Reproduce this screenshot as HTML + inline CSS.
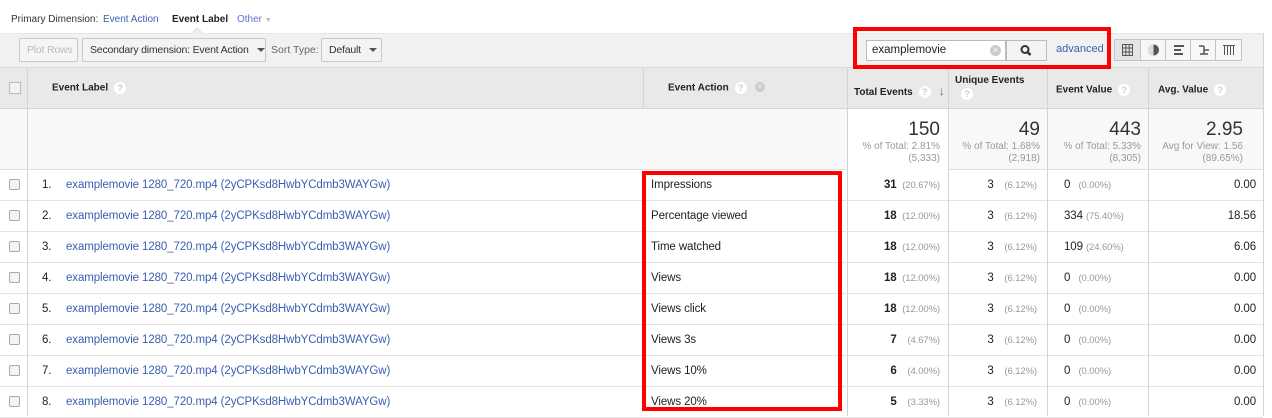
<!DOCTYPE html>
<html><head><style>
*{box-sizing:border-box;margin:0;padding:0}
body{width:1272px;height:416px;overflow:hidden;background:#fff;font-family:"Liberation Sans",Arial,sans-serif;font-size:11px;color:#222;position:relative}
.a{position:absolute;white-space:nowrap}
.lnk{color:#3a5fb0}
.btn{position:absolute;white-space:nowrap;overflow:hidden;border:1px solid #c8c8c8;border-radius:2px;background:#f3f3f3;height:24px;line-height:22px;padding:0 7px;color:#333;font-size:10.5px;letter-spacing:-0.2px}
.car{display:inline-block;width:0;height:0;border-left:4px solid transparent;border-right:4px solid transparent;border-top:4px solid #555;vertical-align:middle;margin-left:8px}
.q{display:inline-block;width:12px;height:12px;border-radius:6px;background:#fff;color:#ccc;font-size:9px;text-align:center;line-height:12px;vertical-align:middle;margin-left:6px}
.vl{position:absolute;width:1px;background:#d4d4d4}
.row{position:absolute;left:0;width:1263px;height:31px;border-bottom:1px solid #e4e4e4;white-space:nowrap}
.cb{position:absolute;left:9px;top:9px;width:11px;height:11px;border:1px solid #aaa;border-radius:2px;background:#f4f4f4}
.c{position:absolute;top:9px;font-size:11.5px;letter-spacing:-0.1px}
.r{text-align:right}
.p{color:#999;font-size:9.5px}
.num{font-size:19px;color:#333}
.sub{font-size:10px;color:#999;line-height:12px}
</style></head><body>
<div class="a" style="left:11px;top:14px;font-size:10px;color:#333">Primary Dimension:</div>
<div class="a lnk" style="left:103px;top:14px;font-size:10px">Event Action</div>
<div class="a" style="left:172px;top:14px;font-weight:bold;color:#222;font-size:10px">Event Label</div>
<div class="a" style="left:237px;top:14px;color:#6a6ad8;font-size:10px">Other <span style="color:#bbb;font-size:7px">▼</span></div>
<div class="a" style="left:0;top:33px;width:1263px;height:34px;background:#f1f1f1;border-top:1px solid #e6e6e6"></div>
<div class="a" style="left:193px;top:29px;width:8px;height:8px;background:#f1f1f1;border-left:1px solid #e0e0e0;border-top:1px solid #e0e0e0;transform:rotate(45deg)"></div>
<div class="btn" style="left:19px;top:38px;width:59px;color:#bbb;background:#f5f5f5">Plot Rows</div>
<div class="btn" style="left:82px;top:38px;width:184px">Secondary dimension: Event Action<span class="car"></span></div>
<div class="a" style="left:271px;top:44px;color:#666;font-size:10.5px">Sort Type:</div>
<div class="btn" style="left:321px;top:38px;width:61px">Default<span class="car"></span></div>
<div class="a" style="left:866px;top:40px;width:140px;height:21px;border:1px solid #bbb;background:#fff;padding:3px 5px;font-size:11.5px">examplemovie<span style="position:absolute;right:4px;top:4px;width:11px;height:11px;border-radius:6px;background:#ccc;color:#fff;font-size:9px;line-height:11px;text-align:center">×</span></div>
<div class="a" style="left:1006px;top:40px;width:41px;height:21px;border:1px solid #bbb;background:#f4f4f4"><svg width="41" height="21" style="position:absolute;left:-1px;top:-1px"><circle cx="19" cy="9.5" r="3.5" fill="none" stroke="#333" stroke-width="2"/><line x1="21.5" y1="12" x2="24.5" y2="15" stroke="#333" stroke-width="2.5"/></svg></div>
<div class="a lnk" style="left:1056px;top:43px;font-size:11px">advanced</div>
<div class="a" style="left:1114px;top:39px;width:128px;height:22px;border:1px solid #c4c4c4;background:#f7f7f7;display:flex">
<div style="width:26px;border-right:1px solid #c4c4c4;background:#e4e4e4"><svg width="25" height="20"><g stroke="#555" fill="none"><rect x="7.5" y="4.5" width="10" height="11"/><line x1="10.8" y1="4" x2="10.8" y2="16"/><line x1="14.2" y1="4" x2="14.2" y2="16"/><line x1="7" y1="8" x2="18" y2="8"/><line x1="7" y1="12" x2="18" y2="12"/></g></svg></div>
<div style="width:25px;border-right:1px solid #c4c4c4"><svg width="25" height="20"><circle cx="12.5" cy="10" r="5.5" fill="#555"/><path d="M12.5 4.5 A5.5 5.5 0 0 0 12.5 15.5Z" fill="#ddd"/></svg></div>
<div style="width:25px;border-right:1px solid #c4c4c4"><svg width="25" height="20"><g fill="#555"><rect x="8" y="5" width="10" height="2"/><rect x="8" y="9" width="7" height="2"/><rect x="8" y="13" width="9" height="2"/></g></svg></div>
<div style="width:25px;border-right:1px solid #c4c4c4"><svg width="25" height="20"><g stroke="#555" stroke-width="1.5" fill="none"><path d="M8 6h5M13 6v8M13 10h5M9 14h8"/></g></svg></div>
<div style="width:25px"><svg width="25" height="20"><g stroke="#555" stroke-width="1"><path d="M8.5 6v9M11.5 6v9M14.5 6v9M17.5 6v9M7 5.5h12"/></g></svg></div>
</div>
<!-- header -->
<div class="a" style="left:0;top:67px;width:1263px;height:42px;background:#e9e9e9;border-top:1px solid #d8d8d8;border-bottom:1px solid #d4d4d4"></div>
<div class="a" style="left:0;top:109px;width:1263px;height:61px;background:#f8f8f8;border-bottom:1px solid #e0e0e0"></div>
<div class="a" style="left:848px;top:109px;width:101px;height:61px;background:#fff"></div>
<div class="a" style="left:9px;top:82px;width:12px;height:12px;border:1px solid #bbb;background:#f2f2f2"></div>
<div class="a" style="left:52px;top:82px;font-weight:bold;font-size:10px">Event Label<span class="q">?</span></div>
<div class="a" style="left:668px;top:82px;font-weight:bold;font-size:10px">Event Action<span class="q">?</span><span style="display:inline-block;width:10px;height:10px;border-radius:5px;background:#ccc;color:#e9e9e9;font-size:8px;line-height:10px;text-align:center;margin-left:8px;vertical-align:top">×</span></div>
<div class="a" style="left:854px;top:84px;font-weight:bold;font-size:10px">Total Events<span class="q">?</span><span style="color:#666;margin-left:8px;font-size:12px">↓</span></div>
<div class="a" style="left:955px;top:75px;font-weight:bold;font-size:10px">Unique Events<br><span class="q" style="margin:2px 0 0 6px">?</span></div>
<div class="a" style="left:1056px;top:84px;font-weight:bold;font-size:10px">Event Value<span class="q">?</span></div>
<div class="a" style="left:1158px;top:84px;font-weight:bold;font-size:10px">Avg. Value<span class="q">?</span></div>
<div class="a r" style="left:848px;top:119px;width:92px"><div class="num">150</div><div class="sub">% of Total: 2.81%<br>(5,333)</div></div>
<div class="a r" style="left:949px;top:119px;width:91px"><div class="num">49</div><div class="sub">% of Total: 1.68%<br>(2,918)</div></div>
<div class="a r" style="left:1047px;top:119px;width:94px"><div class="num">443</div><div class="sub">% of Total: 5.33%<br>(8,305)</div></div>
<div class="a r" style="left:1149px;top:119px;width:94px"><div class="num">2.95</div><div class="sub">Avg for View: 1.56<br>(89.65%)</div></div>

<div class="row" style="top:170px"><div class="cb"></div><div class="c" style="left:42px">1.</div><div class="c lnk" style="left:66px">examplemovie 1280_720.mp4 (2yCPKsd8HwbYCdmb3WAYGw)</div><div class="c" style="left:651px">Impressions</div><div class="c r" style="left:848px;width:92px"><b>31</b> <span class="p">&nbsp;(20.67%)</span></div><div class="c r" style="left:949px;width:88px">3 <span class="p">&nbsp;&nbsp;&nbsp;(6.12%)</span></div><div class="c" style="left:1064px">0 <span class="p">&nbsp;&nbsp;(0.00%)</span></div><div class="c r" style="left:1149px;width:107px">0.00</div></div>
<div class="row" style="top:201px"><div class="cb"></div><div class="c" style="left:42px">2.</div><div class="c lnk" style="left:66px">examplemovie 1280_720.mp4 (2yCPKsd8HwbYCdmb3WAYGw)</div><div class="c" style="left:651px">Percentage viewed</div><div class="c r" style="left:848px;width:92px"><b>18</b> <span class="p">&nbsp;(12.00%)</span></div><div class="c r" style="left:949px;width:88px">3 <span class="p">&nbsp;&nbsp;&nbsp;(6.12%)</span></div><div class="c" style="left:1064px">334 <span class="p">(75.40%)</span></div><div class="c r" style="left:1149px;width:107px">18.56</div></div>
<div class="row" style="top:232px"><div class="cb"></div><div class="c" style="left:42px">3.</div><div class="c lnk" style="left:66px">examplemovie 1280_720.mp4 (2yCPKsd8HwbYCdmb3WAYGw)</div><div class="c" style="left:651px">Time watched</div><div class="c r" style="left:848px;width:92px"><b>18</b> <span class="p">&nbsp;(12.00%)</span></div><div class="c r" style="left:949px;width:88px">3 <span class="p">&nbsp;&nbsp;&nbsp;(6.12%)</span></div><div class="c" style="left:1064px">109 <span class="p">(24.60%)</span></div><div class="c r" style="left:1149px;width:107px">6.06</div></div>
<div class="row" style="top:263px"><div class="cb"></div><div class="c" style="left:42px">4.</div><div class="c lnk" style="left:66px">examplemovie 1280_720.mp4 (2yCPKsd8HwbYCdmb3WAYGw)</div><div class="c" style="left:651px">Views</div><div class="c r" style="left:848px;width:92px"><b>18</b> <span class="p">&nbsp;(12.00%)</span></div><div class="c r" style="left:949px;width:88px">3 <span class="p">&nbsp;&nbsp;&nbsp;(6.12%)</span></div><div class="c" style="left:1064px">0 <span class="p">&nbsp;&nbsp;(0.00%)</span></div><div class="c r" style="left:1149px;width:107px">0.00</div></div>
<div class="row" style="top:294px"><div class="cb"></div><div class="c" style="left:42px">5.</div><div class="c lnk" style="left:66px">examplemovie 1280_720.mp4 (2yCPKsd8HwbYCdmb3WAYGw)</div><div class="c" style="left:651px">Views click</div><div class="c r" style="left:848px;width:92px"><b>18</b> <span class="p">&nbsp;(12.00%)</span></div><div class="c r" style="left:949px;width:88px">3 <span class="p">&nbsp;&nbsp;&nbsp;(6.12%)</span></div><div class="c" style="left:1064px">0 <span class="p">&nbsp;&nbsp;(0.00%)</span></div><div class="c r" style="left:1149px;width:107px">0.00</div></div>
<div class="row" style="top:325px"><div class="cb"></div><div class="c" style="left:42px">6.</div><div class="c lnk" style="left:66px">examplemovie 1280_720.mp4 (2yCPKsd8HwbYCdmb3WAYGw)</div><div class="c" style="left:651px">Views 3s</div><div class="c r" style="left:848px;width:92px"><b>7</b> <span class="p">&nbsp;&nbsp;&nbsp;(4.67%)</span></div><div class="c r" style="left:949px;width:88px">3 <span class="p">&nbsp;&nbsp;&nbsp;(6.12%)</span></div><div class="c" style="left:1064px">0 <span class="p">&nbsp;&nbsp;(0.00%)</span></div><div class="c r" style="left:1149px;width:107px">0.00</div></div>
<div class="row" style="top:356px"><div class="cb"></div><div class="c" style="left:42px">7.</div><div class="c lnk" style="left:66px">examplemovie 1280_720.mp4 (2yCPKsd8HwbYCdmb3WAYGw)</div><div class="c" style="left:651px">Views 10%</div><div class="c r" style="left:848px;width:92px"><b>6</b> <span class="p">&nbsp;&nbsp;&nbsp;(4.00%)</span></div><div class="c r" style="left:949px;width:88px">3 <span class="p">&nbsp;&nbsp;&nbsp;(6.12%)</span></div><div class="c" style="left:1064px">0 <span class="p">&nbsp;&nbsp;(0.00%)</span></div><div class="c r" style="left:1149px;width:107px">0.00</div></div>
<div class="row" style="top:387px"><div class="cb"></div><div class="c" style="left:42px">8.</div><div class="c lnk" style="left:66px">examplemovie 1280_720.mp4 (2yCPKsd8HwbYCdmb3WAYGw)</div><div class="c" style="left:651px">Views 20%</div><div class="c r" style="left:848px;width:92px"><b>5</b> <span class="p">&nbsp;&nbsp;&nbsp;(3.33%)</span></div><div class="c r" style="left:949px;width:88px">3 <span class="p">&nbsp;&nbsp;&nbsp;(6.12%)</span></div><div class="c" style="left:1064px">0 <span class="p">&nbsp;&nbsp;(0.00%)</span></div><div class="c r" style="left:1149px;width:107px">0.00</div></div>

<div class="vl" style="left:27px;top:67px;height:349px"></div>
<div class="vl" style="left:643px;top:67px;height:42px"></div>
<div class="vl" style="left:847px;top:67px;height:349px"></div>
<div class="vl" style="left:948px;top:67px;height:349px"></div>
<div class="vl" style="left:1047px;top:67px;height:349px"></div>
<div class="vl" style="left:1148px;top:67px;height:349px"></div>
<div class="vl" style="left:1263px;top:33px;height:383px"></div>

<div class="a" style="left:853px;top:27px;width:258px;height:42px;border:4px solid #f00"></div>
<div class="a" style="left:642px;top:171px;width:200px;height:240px;border:4px solid #f00"></div>
</body></html>
